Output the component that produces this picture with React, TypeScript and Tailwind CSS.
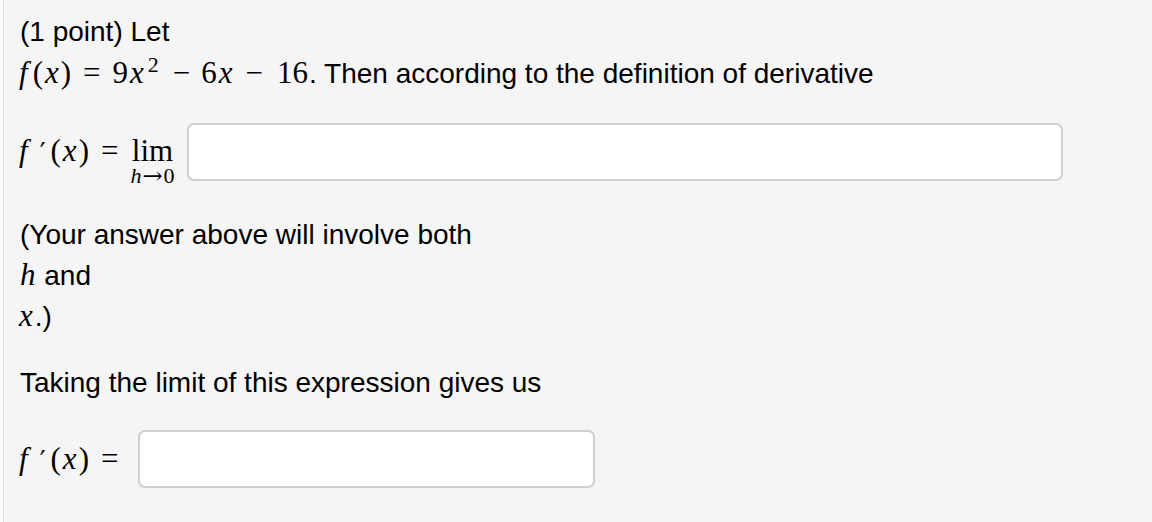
const sans = "font-['Liberation_Sans',Arial,sans-serif]";
const serif = "font-['Liberation_Serif','Times_New_Roman',serif]";

function M({ children }: { children: React.ReactNode }) {
  return <span className={`${serif} text-[31px]`}>{children}</span>;
}

// italic f / x with room added so the glyphs take TeX-like widths
function F() {
  return <span className="mr-[5px] ml-[2px] italic">f</span>;
}
function X() {
  return <span className="mx-[2px] italic">x</span>;
}
function Eq() {
  return <span className="mx-[12px]">=</span>;
}
function Minus() {
  return <span className="mx-[11px]">−</span>;
}

function FPrime() {
  return (
    <M>
      <F />
      <span className="ml-[7px] mr-[5px] font-['DejaVu_Serif',serif] text-[26px]">′</span>(<X />)
      <Eq />
    </M>
  );
}

export default function App() {
  return (
    <div className="h-[522px] w-full bg-[#fafafa] pl-[3px]">
      <div className={`h-full border-l border-[#dedede] bg-[#f5f5f5] pl-[13px] pt-[12px] text-[28px] leading-[40px] text-black ${sans}`}>
        <div className="pl-[3px]">(1 point) Let</div>
        <div className="leading-[42px]">
          <M>
            <F />(<X />)
            <Eq />9<X />
            <sup className="ml-[2px] mr-[3px] text-[22px]">2</sup>
            <Minus />6<X />
            <Minus />
            <span className="ml-[3px]">16</span>
          </M>
          <span className="ml-[1px]">. Then according to the definition of derivative</span>
        </div>

        <div className="mt-[28px] flex h-[58px] items-start">
          <div className="mt-[8px] flex items-start leading-[40px]">
            <FPrime />
            <div className={`mt-[5px] flex flex-col items-center ${serif}`}>
              <span className="text-[31px] leading-[30px]">lim</span>
              <span className="flex items-center text-[22px] leading-[20px]">
                <span className="italic">h</span>
                <span className="mx-[1px] font-['DejaVu_Serif',serif] text-[24px]">→</span>0
              </span>
            </div>
          </div>
          <input className="ml-[12px] h-[58px] w-[876px] rounded-[7px] border-2 border-[#cfcfcf] bg-white outline-none" />
        </div>

        <div className="mt-[34px] pl-[3px]">(Your answer above will involve both</div>
        <div>
          <M>
            <span className="ml-[3px] mr-[1px] italic">h</span>
          </M>{" "}
          and
        </div>
        <div>
          <M>
            <X />
          </M>
          .)
        </div>

        <div className="mt-[26px] pl-[3px]">Taking the limit of this expression gives us</div>

        <div className="mt-[27px] flex items-center">
          <FPrime />
          <input className="ml-[8px] h-[58px] w-[457px] rounded-[7px] border-2 border-[#cfcfcf] bg-white outline-none" />
        </div>
      </div>
    </div>
  );
}
